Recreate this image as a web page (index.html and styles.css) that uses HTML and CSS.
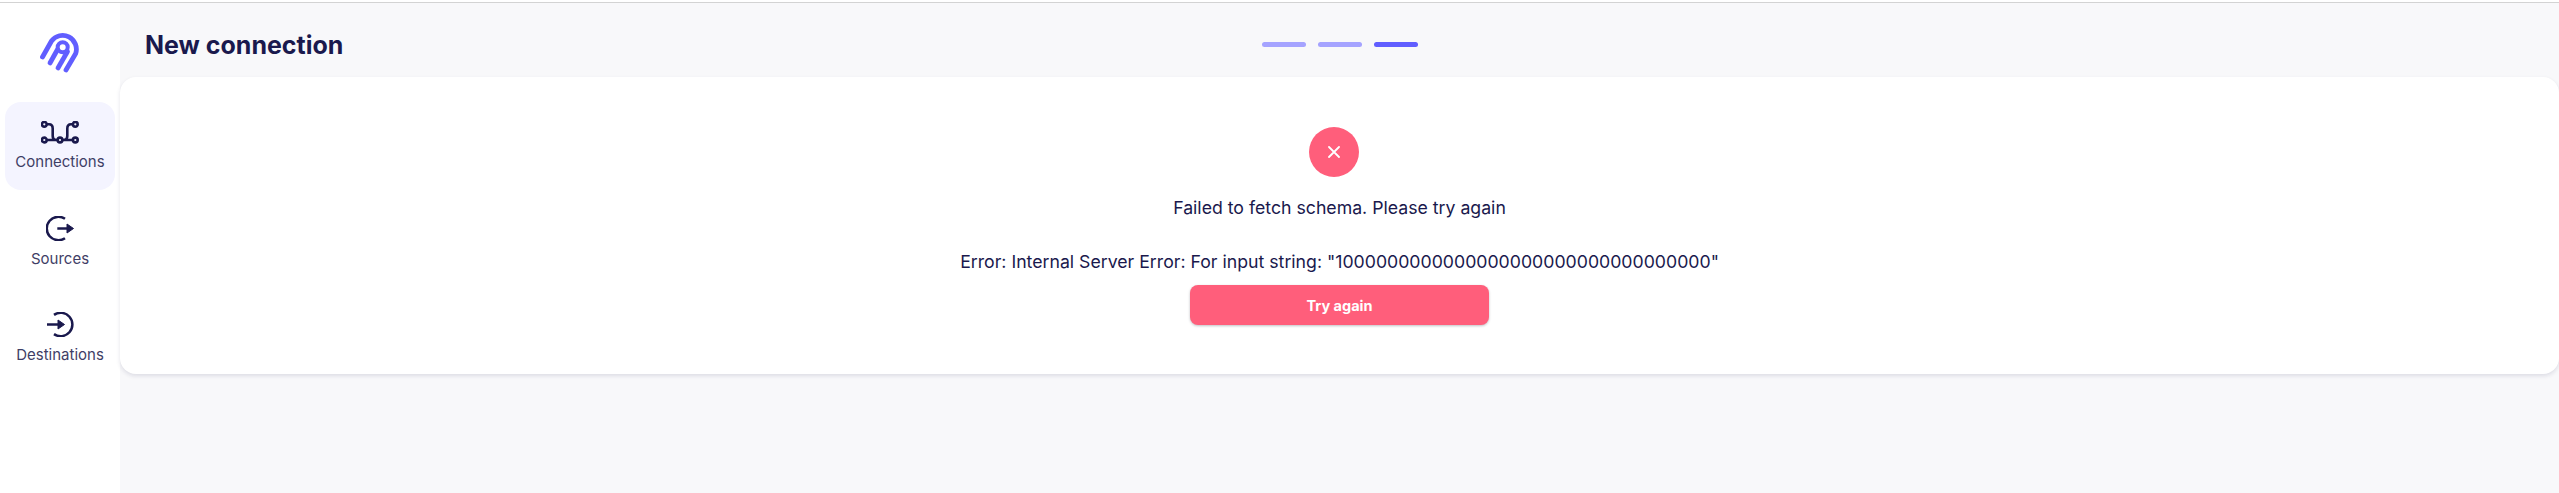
FILE: index.html
```html
<!DOCTYPE html>
<html lang="en">
<head>
<meta charset="utf-8">
<title>New connection</title>
<link rel="stylesheet" href="styles.css">
</head>
<body>
<div class="app">
  <nav class="sidebar">
    <a class="logo">
      <svg width="40" height="41" viewBox="0 0 40 41" fill="none" stroke="#615eff" stroke-width="4.800" stroke-linecap="round" stroke-linejoin="round">
        <path d="M2.500 25 L11.500 9 A13.800 13.800 0 0 1 35.700 21.500 L26 38"/>
        <path d="M10 31 L17.500 17.500"/>
        <path d="M18 36 L27.500 19.500"/>
        <circle cx="22.700" cy="15.300" r="5" stroke-width="4"/>
      </svg>
    </a>
    <a class="nav-item active">
      <svg class="nav-icon icon-connections" width="38" height="23" viewBox="0 0 38 23" fill="none" stroke="#1a194d" stroke-width="2.600">
        <circle cx="3.300" cy="3.300" r="2.400"/><circle cx="34.300" cy="3.300" r="2.400"/>
        <circle cx="3.300" cy="19" r="2.400"/><circle cx="19" cy="19" r="2.400"/><circle cx="34.300" cy="19" r="2.400"/>
        <path d="M5.700 3.300 H8 C10.500 3.300 11.700 5 11.700 7.500 V15 C11.700 17.500 13 19 15 19 M5.700 19 H16.600 M31.900 3.300 H30 C27.500 3.300 26.300 5 26.300 7.500 V15 C26.300 17.500 25 19 23 19 M21.400 19 H31.900"/>
      </svg>
      <span>Connections</span>
    </a>
    <a class="nav-item">
      <svg class="nav-icon" width="28" height="25" viewBox="0 0 28 25" fill="none" stroke="#1a194d" stroke-width="2.500">
        <path d="M19 2.800 A11.700 11.700 0 1 0 19 22.200"/>
        <path d="M11.300 12.500 H22"/>
        <path d="M21 8 L27.500 12.500 L21 17 Z" fill="#1a194d" stroke-width="1" stroke-linejoin="round"/>
      </svg>
      <span>Sources</span>
    </a>
    <a class="nav-item">
      <svg class="nav-icon" width="28" height="25" viewBox="0 0 28 25" fill="none" stroke="#1a194d" stroke-width="2.500">
        <path d="M8 2.900 A11.700 11.700 0 1 1 8 22.100"/>
        <path d="M1 12.500 H13"/>
        <path d="M12 8 L18.500 12.500 L12 17 Z" fill="#1a194d" stroke-width="1" stroke-linejoin="round"/>
      </svg>
      <span>Destinations</span>
    </a>
  </nav>
  <main class="content">
    <header class="page-header">
      <h1 class="title">New connection</h1>
      <div class="steps">
        <span class="step done"></span>
        <span class="step done"></span>
        <span class="step current"></span>
      </div>
    </header>
    <section class="card">
      <div class="error-icon">
        <svg width="12" height="12" viewBox="0 0 12 12" stroke="#fff" stroke-width="1.800" stroke-linecap="round"><path d="M1 1 L11 11 M11 1 L1 11"/></svg>
      </div>
      <p class="message">Failed to fetch schema. Please try again</p>
      <p class="detail">Error: Internal Server Error: For input string: "1000000000000000000000000000000000"</p>
      <button class="retry">Try again</button>
    </section>
  </main>
</div>
</body>
</html>
```
FILE: styles.css
```css
* { box-sizing: border-box; }
html, body { margin: 0; height: 100%; }
html { background: #fff; }
body {
  font-family: Inter, "Liberation Sans", sans-serif;
  color: #1a194d;
  padding-top: 2px;
  overflow: hidden;
}
.app {
  display: flex;
  height: 100%;
  border-top: 1px solid #d3d3d3;
  background: #f8f8fa;
}
.sidebar {
  width: 120px;
  flex: none;
  background: #fff;
  display: flex;
  flex-direction: column;
  align-items: center;
  padding: 0 5px;
}
.logo {
  height: 99px;
  display: flex;
  align-items: center;
  justify-content: center;
}
.nav-item {
  width: 110px;
  height: 88px;
  border-radius: 16px;
  margin-bottom: 8px;
  padding-top: 18px;
  display: flex;
  flex-direction: column;
  align-items: center;
  gap: 9px;
  font-size: 15px;
  line-height: 17px;
  color: #3f3e66;
}
.nav-item.active { background: #f4f4ff; }
.icon-connections { margin-top: 1px; }
.content { flex: 1; min-width: 0; }
.page-header {
  height: 74px;
  padding: 9px 25px 0;
  display: grid;
  grid-template-columns: 1fr auto 1fr;
  align-items: center;
}
.title {
  margin: 0;
  font-size: 25px;
  line-height: 30px;
  font-weight: 700;
  color: #1a194d;
}
.steps { display: flex; gap: 12px; }
.step { width: 44px; height: 5px; border-radius: 3px; }
.step.done { background: #a5a3ff; }
.step.current { background: #615eff; }
.card {
  background: #fff;
  height: 297px;
  border-radius: 16px;
  box-shadow: 0 2px 4px rgba(26, 25, 77, 0.12);
  display: flex;
  flex-direction: column;
  align-items: center;
  padding-top: 50px;
}
.error-icon {
  width: 50px;
  height: 50px;
  margin-right: 11px;
  border-radius: 50%;
  background: #ff5e7b;
  display: flex;
  align-items: center;
  justify-content: center;
}
.message { margin: 20px 0 0; font-size: 17.700px; line-height: 21px; }
.detail { margin: 33px 0 0; font-size: 17.700px; line-height: 21px; }
.retry {
  margin-top: 13px;
  width: 299px;
  height: 40px;
  border: 0;
  border-radius: 8px;
  background: #ff5e7b;
  color: #fff;
  font: 700 14.500px/17px Inter, "Liberation Sans", sans-serif;
  box-shadow: 0 1px 3px rgba(53, 53, 66, 0.2), 0 1px 2px rgba(53, 53, 66, 0.12);
}
```
